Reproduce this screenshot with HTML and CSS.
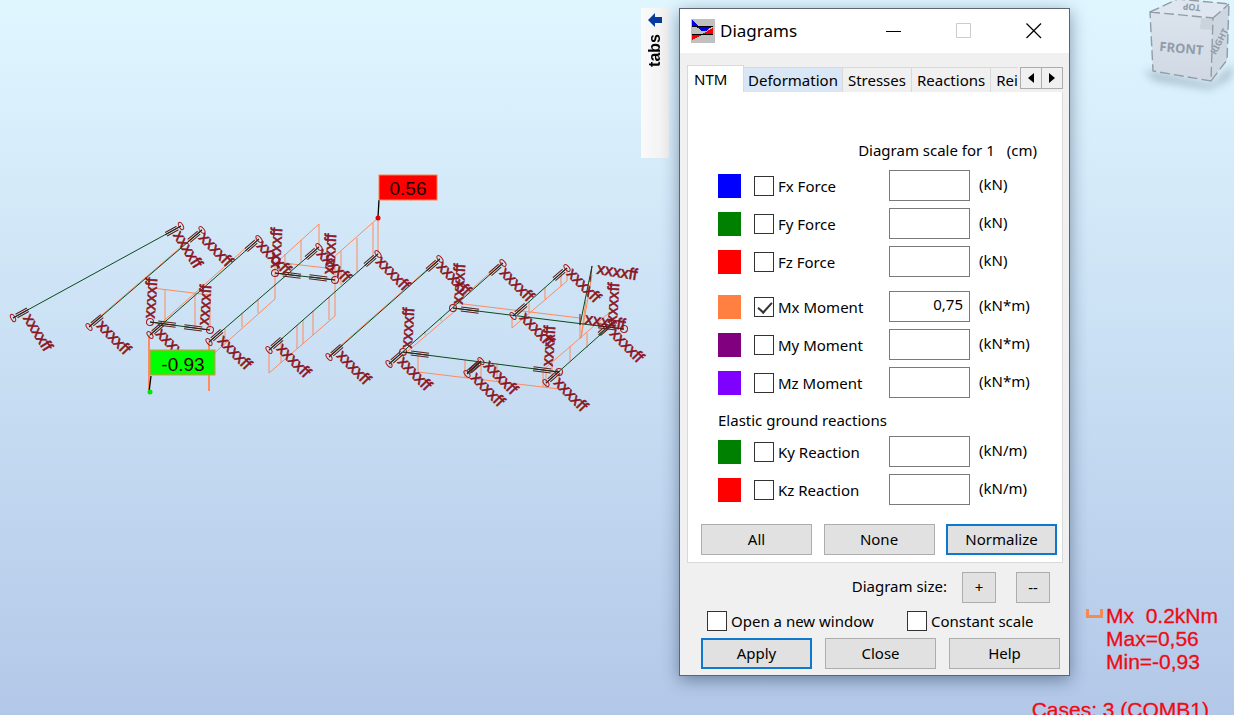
FILE: index.html
```html
<!DOCTYPE html>
<html lang="en">
<head>
<meta charset="utf-8">
<meta name="viewport" content="width=device-width, initial-scale=1">
<title>Diagrams</title>
<link rel="stylesheet" href="styles.css">
</head>
<body>
<main class="workspace">
  <svg class="model" width="680" height="430" viewBox="0 0 680 430" role="img" aria-label="Structure with Mx moment diagram">
    <defs>
      <g id="end">
        <ellipse class="node" rx="2" ry="4"/>
        <path class="bar" d="M4 -2H17M4 2H17"/><path class="bar-core" d="M0 0H18"/>
      </g>
      <g id="joint">
        <circle class="node" r="3.5"/>
        <path class="bar" d="M8 -2H26M8 2H26"/><path class="bar-core" d="M0 0H26"/>
      </g>
    </defs>
    <path class="moment" d="M89 326L202 229M150 333L258 237M152 288L210 295V329M165 289V323M195 293V327
      M210 357L275 299V264L319 224V247M225 329V343M242 313V327M258 300V313M301 240V262M285 254V268
      M275 262L335 269M291 263V274M269 350V373L335 316V256L378 218V254M281 340V363M297 325V349M303 320V344M313 311V335M329 297V320
      M341 251V285M357 238V272M373 223V258M329 356L440 258M389 367L455 311M453 306L502 262M441 318V321M425 331V335
      M418 356V372L559 389V372M465 360V378M481 362V380M497 364V381M543 370V387M546 370V387
      M455 303L580 318V339M512 317V328L567 281V268M529 301V313M545 287V299M561 273V286
      M543 370L609 313M552 361V377M570 346V361M587 333V348M600 322V335M467 371L481 358M592 275L581 338L586 300"/>
    <path class="moment-strong" d="M149 335V390M209 342V391"/>
    <path class="member" d="M13 318L181 226M89 327L202 230M150 335L259 239M150 322L210 330M209 342L319 247M275 273L335 280M269 350L378 254M329 357L440 259M389 364L503 263M403 352L559 372M453 308L624 329M513 316L567 268M546 383L609 327M467 373L481 361M592 266L580 325"/>
    <g>
      <use href="#end" transform="translate(13 318) rotate(-29)"/><use href="#end" transform="translate(181 226) rotate(151)"/>
      <use href="#end" transform="translate(89 327) rotate(-40)"/><use href="#end" transform="translate(202 230) rotate(140)"/>
      <use href="#end" transform="translate(150 335) rotate(-41)"/><use href="#end" transform="translate(259 239) rotate(139)"/>
      <use href="#end" transform="translate(209 342) rotate(-41)"/><use href="#end" transform="translate(319 247) rotate(139)"/>
      <use href="#end" transform="translate(269 350) rotate(-41)"/><use href="#end" transform="translate(378 254) rotate(139)"/>
      <use href="#end" transform="translate(329 357) rotate(-41)"/><use href="#end" transform="translate(440 259) rotate(139)"/>
      <use href="#end" transform="translate(389 364) rotate(-41)"/><use href="#end" transform="translate(503 263) rotate(139)"/>
      <use href="#end" transform="translate(513 316) rotate(-41)"/><use href="#end" transform="translate(567 268) rotate(139)"/>
      <use href="#end" transform="translate(546 383) rotate(-41)"/><use href="#end" transform="translate(612 323) rotate(139)"/>
      <use href="#end" transform="translate(467 374) rotate(-41)"/><use href="#end" transform="translate(481 361) rotate(139)"/>
      <use href="#joint" transform="translate(150 322) rotate(7)"/><use href="#joint" transform="translate(210 330) rotate(187)"/>
      <use href="#joint" transform="translate(275 273) rotate(7)"/><use href="#joint" transform="translate(335 280) rotate(187)"/>
      <use href="#joint" transform="translate(403 352) rotate(7)"/><use href="#joint" transform="translate(559 372) rotate(187)"/>
      <use href="#joint" transform="translate(453 308) rotate(7)"/><use href="#joint" transform="translate(624 329) rotate(187)"/>
    </g>
    <path class="bar" d="M592 266L590 282M580 314V325"/>
    <g class="support">
      <text transform="translate(37 333) rotate(58)" y="4">xxxxff</text>
      <text transform="translate(113 338) rotate(46)" y="4">xxxxff</text>
      <text transform="translate(187 250) rotate(58)" y="4">xxxxff</text>
      <text transform="translate(215 250) rotate(46)" y="4">xxxxff</text>
      <text transform="translate(152 298) rotate(-86)" y="4">xxxxff</text>
      <text transform="translate(206 305) rotate(-86)" y="4">xxxxff</text>
      <text transform="translate(172 346) rotate(46)" y="4">xxxxff</text>
      <text transform="translate(234 353) rotate(46)" y="4">xxxxff</text>
      <text transform="translate(277 248) rotate(-86)" y="4">xxxxff</text>
      <text transform="translate(273 258) rotate(46)" y="4">xxxxff</text>
      <text transform="translate(331 254) rotate(-86)" y="4">xxxxff</text>
      <text transform="translate(333 266) rotate(46)" y="4">xxxxff</text>
      <text transform="translate(392 274) rotate(46)" y="4">xxxxff</text>
      <text transform="translate(293 361) rotate(46)" y="4">xxxxff</text>
      <text transform="translate(353 368) rotate(46)" y="4">xxxxff</text>
      <text transform="translate(409 328) rotate(-86)" y="4">xxxxff</text>
      <text transform="translate(414 374) rotate(46)" y="4">xxxxff</text>
      <text transform="translate(453 279) rotate(46)" y="4">xxxxff</text>
      <text transform="translate(460 284) rotate(-86)" y="4">xxxxff</text>
      <text transform="translate(516 285) rotate(46)" y="4">xxxxff</text>
      <text transform="translate(583 286) rotate(46)" y="4">xxxxff</text>
      <text transform="translate(617 273) rotate(9)" y="4">xxxxff</text>
      <text transform="translate(614 303) rotate(-86)" y="4">xxxxff</text>
      <text transform="translate(605 323) rotate(9)" y="4">xxxxff</text>
      <text transform="translate(626 346) rotate(46)" y="4">xxxxff</text>
      <text transform="translate(536 330) rotate(46)" y="4">xxxxff</text>
      <text transform="translate(550 346) rotate(-86)" y="4">xxxxff</text>
      <text transform="translate(500 378) rotate(46)" y="4">xxxxff</text>
      <text transform="translate(487 390) rotate(46)" y="4">xxxxff</text>
      <text transform="translate(570 395) rotate(46)" y="4">xxxxff</text>
    </g>
    <path class="leader" d="M379 200L378 217M151 376L149 392"/>
    <circle cx="378" cy="218" r="2.5" fill="#e00000"/>
    <circle cx="150" cy="392" r="2.5" fill="#00e600"/>
    <rect class="tag" x="379" y="175" width="58" height="25" fill="#ff0000"/>
    <rect class="tag" x="150" y="350" width="65" height="25" fill="#00ff00"/>
    <text class="tag-text" x="408" y="195">0.56</text>
    <text class="tag-text" x="183" y="371">-0.93</text>
  </svg>

  <button class="side-tab" type="button">
    <svg width="16" height="14" viewBox="0 0 16 14" aria-hidden="true"><path d="M1 7L8 0V4H15V10H8V14Z" fill="#083a9c"/></svg>
    <span class="side-label">tabs</span>
  </button>

  <svg class="cube" width="104" height="100" viewBox="0 0 104 100" role="img" aria-label="View cube">
    <defs>
      <filter id="soft" x="-30%" y="-60%" width="160%" height="220%"><feGaussianBlur stdDeviation="4"/></filter>
      <linearGradient id="face" x2="0" y2="1"><stop stop-color="#dbe4ed"/><stop offset="1" stop-color="#d0d9e3"/></linearGradient>
    </defs>
    <path d="M14 70L82 84L104 64L100 78L80 89L24 80Z" fill="#7f93a3" opacity=".6" filter="url(#soft)"/>
    <path d="M20 12L48 -2L99 4L83 18Z" fill="#dee7ef"/>
    <path d="M20 12L83 18L81 81L23 71Z" fill="url(#face)"/>
    <path d="M83 18L99 4L97 60L81 81Z" fill="#ccd7e2"/>
    <path d="M71 18L83 19V30L70 29Z" fill="#cbd3dc"/>
    <path d="M20 12L83 18L81 81L23 71ZM20 12L48 -1L99 4L97 60L81 81M83 18L99 4" fill="none" stroke="#919ca8" stroke-width="1.4" stroke-dasharray="10 4"/>
    <text class="cube-front" transform="translate(51 53) rotate(5)">FRONT</text>
    <text class="cube-top" transform="translate(62 4) rotate(185)">TOP</text>
    <text class="cube-side" transform="translate(92 43) rotate(-62)">RIGHT</text>
  </svg>

  <section class="dialog" role="dialog" aria-labelledby="dialog-title">
    <header class="titlebar">
      <svg width="24" height="24" viewBox="0 0 24 24" shape-rendering="crispEdges" aria-hidden="true">
        <path fill="#c0c0c0" d="M0 0H24V24H0Z"/><path fill="#0000f0" d="M1 1L7 7H22V8L18 9L15 12H11L7 9L1 7Z"/><path fill="#f00000" d="M22 9V15H13L1 21V15H11Z"/>
        <path stroke="#000" stroke-width="1" d="M1 7.5H22M1 15.500H22"/>
      </svg>
      <h1 id="dialog-title">Diagrams</h1>
      <div class="window-buttons">
        <button type="button" aria-label="Minimize"><svg width="16" height="16" viewBox="0 0 16 16"><path d="M0 8.5H15" stroke="#000"/></svg></button>
        <button type="button" aria-label="Maximize" disabled><svg width="16" height="16" viewBox="0 0 16 16"><path d="M.5 .5H14.500V14.500H.5Z" fill="none" stroke="#ccc"/></svg></button>
        <button type="button" aria-label="Close window"><svg width="16" height="16" viewBox="0 0 16 16"><path d="M.5 .5L15 15M15 .5L.5 15" stroke="#000" stroke-width="1.2"/></svg></button>
      </div>
    </header>

    <div class="dialog-body">
      <div class="tabs">
        <div class="tab-list" role="tablist">
          <button class="tab tab-active" type="button" role="tab" aria-selected="true">NTM</button>
          <button class="tab tab-hover" type="button" role="tab">Deformation</button>
          <button class="tab" type="button" role="tab">Stresses</button>
          <button class="tab" type="button" role="tab">Reactions</button>
          <button class="tab tab-cut" type="button" role="tab">Rei</button>
        </div>
        <div class="tab-scroll">
          <button type="button" aria-label="Previous tabs"><svg width="6" height="10" viewBox="0 0 6 10"><path d="M6 0V10L0 5Z"/></svg></button>
          <button type="button" aria-label="Next tabs"><svg width="6" height="10" viewBox="0 0 6 10"><path d="M0 0V10L6 5Z"/></svg></button>
        </div>
      </div>

      <div class="panel">
        <p class="scale-title"><span>Diagram scale for 1</span><span>(cm)</span></p>
        <div class="group">
          <div class="row"><span class="swatch blue"></span><label class="check"><input type="checkbox">Fx Force</label><input class="value" type="text" aria-label="Fx scale"><span>(kN)</span></div>
          <div class="row"><span class="swatch green"></span><label class="check"><input type="checkbox">Fy Force</label><input class="value" type="text" aria-label="Fy scale"><span>(kN)</span></div>
          <div class="row"><span class="swatch red"></span><label class="check"><input type="checkbox">Fz Force</label><input class="value" type="text" aria-label="Fz scale"><span>(kN)</span></div>
        </div>
        <div class="group">
          <div class="row"><span class="swatch orange"></span><label class="check"><input type="checkbox" checked>Mx Moment</label><input class="value" type="text" aria-label="Mx scale" value="0,75"><span>(kN*m)</span></div>
          <div class="row"><span class="swatch purple"></span><label class="check"><input type="checkbox">My Moment</label><input class="value" type="text" aria-label="My scale"><span>(kN*m)</span></div>
          <div class="row"><span class="swatch violet"></span><label class="check"><input type="checkbox">Mz Moment</label><input class="value" type="text" aria-label="Mz scale"><span>(kN*m)</span></div>
        </div>
        <p class="ground-title">Elastic ground reactions</p>
        <div class="group">
          <div class="row"><span class="swatch green"></span><label class="check"><input type="checkbox">Ky Reaction</label><input class="value" type="text" aria-label="Ky scale"><span>(kN/m)</span></div>
          <div class="row"><span class="swatch red"></span><label class="check"><input type="checkbox">Kz Reaction</label><input class="value" type="text" aria-label="Kz scale"><span>(kN/m)</span></div>
        </div>
        <div class="buttons panel-buttons">
          <button class="btn" type="button">All</button>
          <button class="btn" type="button">None</button>
          <button class="btn btn-focus" type="button">Normalize</button>
        </div>
      </div>

      <div class="size-row">
        <span>Diagram size:</span>
        <button class="btn" type="button" aria-label="Increase">+</button>
        <button class="btn" type="button" aria-label="Decrease">--</button>
      </div>
      <div class="options">
        <label class="check"><input type="checkbox">Open a new window</label>
        <label class="check"><input type="checkbox">Constant scale</label>
      </div>
      <div class="buttons dialog-buttons">
        <button class="btn btn-focus" type="button">Apply</button>
        <button class="btn" type="button">Close</button>
        <button class="btn" type="button">Help</button>
      </div>
    </div>
  </section>

  <aside class="legend">
    <svg width="17" height="10" viewBox="0 0 17 10" aria-hidden="true"><path d="M1.500 0V7.500H15.500V0" fill="none" stroke="#f58a55" stroke-width="3"/></svg>
    <p>Mx &nbsp;0.2kNm<br>Max=0,56<br>Min=-0,93</p>
  </aside>
  <p class="cases">Cases: 3 (COMB1)</p>
</main>
</body>
</html>
```
FILE: styles.css
```css
* { box-sizing: border-box; }
body { margin: 0; font-family: "Noto Sans", sans-serif; font-size: 15px; line-height: 20px; color: #000; }
p, h1 { margin: 0; }
button, input { font: inherit; color: inherit; }
button { padding: 0; }

.workspace { position: relative; height: 100vh; overflow: hidden; background: linear-gradient(#e0f6ff, #b3c8e8); }
.model { display: block; }
.moment { fill: none; stroke: #ff8a5c; stroke-width: 1; }
.moment-strong { fill: none; stroke: #ff8c60; stroke-width: 2; }
.member { fill: none; stroke: #0a4a1c; stroke-width: 1; }
.node { fill: none; stroke: #a81818; stroke-width: 1; }
.bar { fill: none; stroke: #5c1c18; stroke-width: 1; }
.bar-core { fill: none; stroke: #302010; stroke-width: 1; }
.support { font-family: "Liberation Sans", sans-serif; font-size: 16px; fill: #8b1420; stroke: #8b1420; stroke-width: .6; text-anchor: middle; }
.leader { stroke: #000; stroke-width: 1.3; }
.tag { stroke: #ff8050; stroke-width: 1; }
.tag-text { font-family: "Liberation Sans", sans-serif; font-size: 19px; text-anchor: middle; fill: #200; }

.side-tab { position: absolute; left: 641px; top: 8px; width: 28px; height: 150px; padding: 5px 0; border: 0; background: linear-gradient(90deg, #fafafa, #f0f0f0); display: flex; flex-direction: column; align-items: center; gap: 7px; }
.side-label { font-family: "Liberation Sans", sans-serif; font-size: 16px; font-weight: bold; writing-mode: vertical-rl; transform: rotate(180deg); }

.cube { position: absolute; right: 0; top: 0; }
.cube text { text-anchor: middle; fill: #919ca8; font-family: "Noto Sans", sans-serif; font-weight: bold; }
.cube .cube-front { font-size: 13px; }
.cube .cube-top { font-size: 9px; }
.cube .cube-side { font-size: 9px; }

.dialog { position: absolute; left: 679px; top: 8px; width: 391px; border: 1px solid #5c6670; background: #f0f0f0; box-shadow: 0 4px 16px rgba(20, 40, 70, .45); }
.titlebar { display: flex; align-items: center; height: 44px; padding-left: 11px; background: #fff; }
.titlebar h1 { flex: 1; padding-left: 5px; font-size: 17px; font-weight: normal; line-height: 24px; }
.window-buttons { display: flex; }
.window-buttons button { width: 70px; height: 44px; border: 0; background: none; display: grid; place-items: center; }

.dialog-body { padding: 12px 6px 6px 7px; }
.tabs { display: flex; align-items: flex-start; position: relative; }
.tab-list { display: flex; align-items: flex-end; flex: 1; min-width: 0; overflow: hidden; }
.tab { flex: none; height: 25px; padding: 0 5px; border: 1px solid #d9d9d9; border-width: 1px 1px 0 0; background: #f0f0f0; line-height: 22px; }
.tab-active { width: 57px; height: 27px; padding: 0 6px; border-left-width: 1px; background: #fff; text-align: left; }
.tab-hover { padding: 0 4px; background: #d8e6f6; }
.tab-cut { border-right: 0; padding-right: 0; }
.tab-scroll { display: flex; padding-top: 2px; }
.tab-scroll button { width: 22px; height: 22px; border: 1px solid #adadad; background: #f0f0f0; display: grid; place-items: center; }
.tab-scroll button + button { margin-left: -1px; }

.panel { border: 1px solid #d9d9d9; border-top: 0; padding: 48px 5px 7px 13px; background: #fff; }
.scale-title { display: flex; justify-content: flex-end; gap: 12px; padding-right: 20px; }
.group { display: flex; flex-direction: column; gap: 7px; margin-top: 14px; padding-left: 17px; }
.scale-title + .group { margin-top: 10px; }
.row { display: grid; grid-template-columns: 36px 135px 81px 1fr; align-items: center; height: 31px; }
.row > span:last-child { padding: 0 0 4px 9px; }
.swatch { width: 23px; height: 24px; }
.blue { background: #0000ff; }
.green { background: #008000; }
.red { background: #ff0000; }
.orange { background: #ff8040; }
.purple { background: #800080; }
.violet { background: #8000ff; }
.check { display: flex; align-items: center; gap: 4px; white-space: nowrap; }
.check input { appearance: none; flex: none; width: 20px; height: 20px; margin: 0; border: 1px solid #333; background: #fff; position: relative; }
.check input:checked::after { content: ""; position: absolute; left: 6px; top: 1px; width: 6px; height: 12px; border: solid #333; border-width: 0 2px 2px 0; transform: rotate(42deg); }
.value { width: 100%; height: 31px; padding: 0 6px 6px; border: 1px solid #7a7a7a; border-radius: 0; background: #fff; text-align: right; }
.ground-title { margin-top: 12px; padding-left: 17px; }
.ground-title + .group { margin-top: 6px; }

.btn { height: 31px; padding-bottom: 2px; border: 1px solid #adadad; border-radius: 0; background: #e1e1e1; }
.btn-focus { border: 2px solid #0f78cc; }
.buttons { display: grid; grid-template-columns: repeat(3, 111px); justify-content: space-between; }
.panel-buttons { margin-top: 19px; }
.size-row { display: flex; justify-content: flex-end; align-items: center; gap: 20px; padding: 9px 13px 8px 0; }
.size-row .btn { width: 34px; }
.size-row span { margin-right: -5px; padding-bottom: 3px; }
.options { display: grid; grid-template-columns: 200px 1fr; padding-left: 20px; }
.dialog-buttons { margin-top: 7px; padding: 0 3px 0 14px; }

.legend { position: absolute; right: 16px; bottom: 42px; display: flex; gap: 3px; }
.legend svg { margin-top: 5px; }
.legend p, .cases { font-family: "Liberation Sans", sans-serif; font-size: 21px; line-height: 23px; color: #f00a14; -webkit-text-stroke: .3px #f00a14; white-space: nowrap; }
.cases { position: absolute; right: 25px; bottom: -6px; }
```
